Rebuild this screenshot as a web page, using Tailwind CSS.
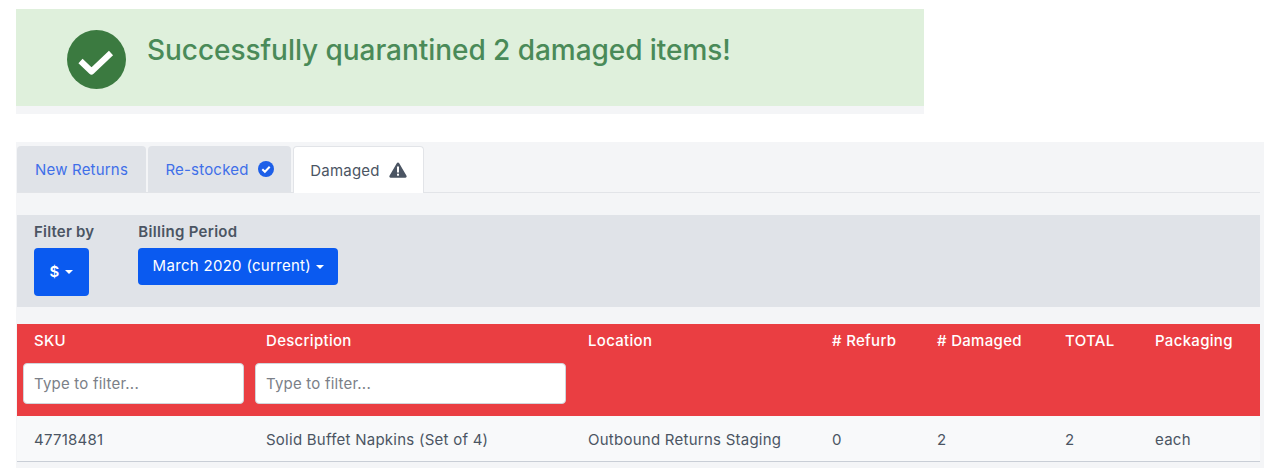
<!DOCTYPE html>
<html lang="en">
<head>
  <meta charset="UTF-8">
  <title>Damaged Returns</title>
  <script src="https://cdn.jsdelivr.net/npm/@tailwindcss/browser@4"></script>
</head>
<body class="bg-white font-['Inter',sans-serif] text-[#4b5563] overflow-hidden h-[468px]">
  <!-- Success banner -->
  <div class="ml-4 mt-[9px] w-[908px] bg-[#f4f5f7] pb-2">
    <div class="h-[97px] bg-[#dff0dc] flex items-start pl-[51px] pt-[21px] gap-[21px]">
      <svg class="w-[59px] h-[59px]" viewBox="0 0 59 59">
        <circle cx="29.5" cy="29.5" r="29.5" fill="#3b7a40"/>
        <path d="M13.500 31L24.500 41.500 44 23" fill="none" stroke="#fff" stroke-width="6" stroke-linejoin="round"/>
      </svg>
      <p class="text-[28px] leading-[40px] font-medium tracking-[-0.05px] text-[#4a8a58]">Successfully quarantined 2 damaged items!</p>
    </div>
  </div>

  <!-- Panel -->
  <div class="ml-4 mt-7 w-[1248px] h-[326px] bg-[#f4f5f7] pl-px pr-1 pt-1">
    <!-- Tabs -->
    <div class="flex h-[47px] gap-[2px] border-b border-[#e2e4e8] text-[15px] tracking-[0.2px]">
      <div class="w-[129px] bg-[#e0e3e8] rounded-t text-[#3f6fe8] flex items-center justify-center pt-[3px]">New Returns</div>
      <div class="w-[143px] bg-[#e0e3e8] rounded-t text-[#3f6fe8] flex items-center justify-center gap-[9px] pt-[3px]">
        Re-stocked
        <svg class="w-4 h-4 -mt-[3px]" viewBox="0 0 16 16">
          <circle cx="8" cy="8" r="8" fill="#1d5fe8"/>
          <path d="M4.300 8.200l2.600 2.600 4.800-5" fill="none" stroke="#fff" stroke-width="2"/>
        </svg>
      </div>
      <div class="w-[131px] h-[47px] bg-white border border-b-0 border-[#e2e4e8] rounded-t flex items-center justify-center gap-[9px] pt-[3px]">
        Damaged
        <svg class="w-[18px] h-4 -mt-[3px]" viewBox="0 0 18 16">
          <path d="M9 .5c.5 0 1 .3 1.200.7l7.300 12.600c.5.900-.1 1.900-1.200 1.900H1.700c-1.100 0-1.700-1-1.200-1.900L7.800 1.200C8 .8 8.500.5 9 .5z" fill="#4b5563"/>
          <rect x="8" y="4.500" width="2" height="6" fill="#fff"/>
          <rect x="8" y="11.700" width="2" height="2" fill="#fff"/>
        </svg>
      </div>
    </div>

    <!-- Filters -->
    <div class="mt-[22px] h-[92px] bg-[#e0e3e8] flex gap-[44px] pl-[17px] pt-[7px]">
      <div>
        <p class="text-[15px] tracking-[0.2px] leading-5 font-semibold">Filter by</p>
        <button class="mt-[6px] w-[55px] h-[48px] bg-[#0a5af0] rounded text-white text-[15px] font-semibold flex items-center justify-center gap-[6px]">
          $
          <span class="border-x-4 border-t-4 border-x-transparent border-t-white"></span>
        </button>
      </div>
      <div>
        <p class="text-[15px] tracking-[0.3px] leading-5 font-semibold">Billing Period</p>
        <button class="mt-[6px] w-[200px] h-[37px] bg-[#0a5af0] rounded text-white text-[15px] tracking-[0.3px] flex items-center justify-center gap-[5px]">
          March 2020 (current)
          <span class="border-x-4 border-t-4 border-x-transparent border-t-white"></span>
        </button>
      </div>
    </div>

    <!-- Table -->
    <div class="mt-[17px]">
      <div class="h-[92px] bg-[#ea3e42] text-white text-[15px] font-medium tracking-[0.3px] relative grid grid-cols-[249px_322px_244px_105px_128px_90px_105px]">
        <div class="pl-[17px] pt-[7px] leading-5">SKU</div>
        <div class="pt-[7px] leading-5">Description</div>
        <div class="pt-[7px] leading-5">Location</div>
        <div class="pt-[7px] leading-5"># Refurb</div>
        <div class="pt-[7px] leading-5"># Damaged</div>
        <div class="pt-[7px] leading-5">TOTAL</div>
        <div class="pt-[7px] leading-5">Packaging</div>
        <input class="absolute left-[6px] top-[39px] w-[221px] h-[41px] bg-white rounded border border-[#d1d5db] px-[10px] text-[15px] font-normal tracking-[0.2px] placeholder:text-[#7b8088]" placeholder="Type to filter...">
        <input class="absolute left-[238px] top-[39px] w-[311px] h-[41px] bg-white rounded border border-[#d1d5db] px-[10px] text-[15px] font-normal tracking-[0.2px] placeholder:text-[#7b8088]" placeholder="Type to filter...">
      </div>
      <div class="h-[46px] pt-[3px] bg-[#f8f9fa] border-b border-[#c9ced6] text-[15px] tracking-[0.25px] items-center grid grid-cols-[249px_322px_244px_105px_128px_90px_105px]">
        <div class="pl-[17px]">47718481</div>
        <div>Solid Buffet Napkins (Set of 4)</div>
        <div>Outbound Returns Staging</div>
        <div>0</div>
        <div>2</div>
        <div>2</div>
        <div>each</div>
      </div>
    </div>
  </div>
</body>
</html>
